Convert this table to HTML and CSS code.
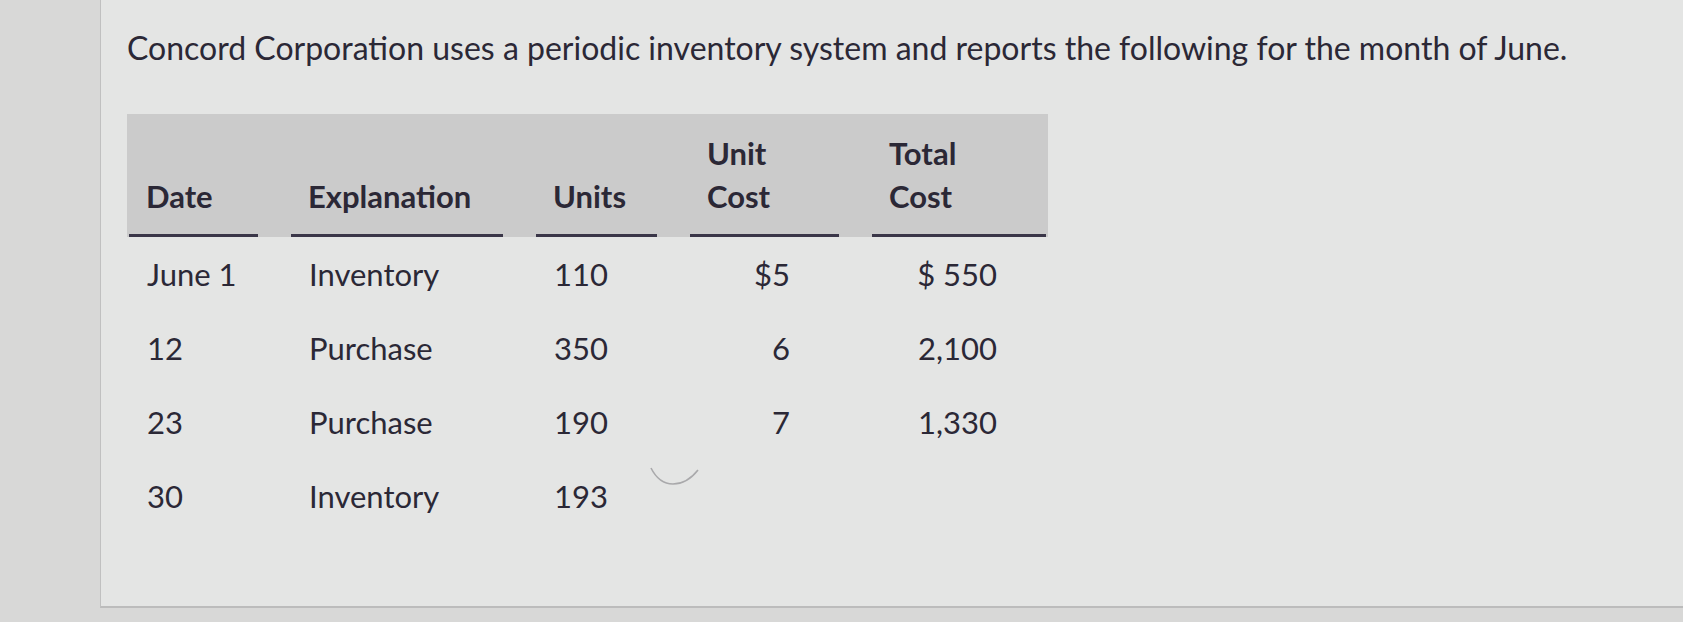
FILE: index.html
```html
<!DOCTYPE html>
<html>
<head>
<meta charset="utf-8">
<link rel="stylesheet" href="styles.css">
</head>
<body>
<div class="screen">
  <div class="side"></div>
  <div class="panel">
    <p class="title">Concord Corporation uses a periodic inventory system and reports the following for the month of June.</p>
    <div class="table">
      <div class="thead">
        <div class="th">Date</div>
        <div class="th">Explanation</div>
        <div class="th">Units</div>
        <div class="th">Unit<br>Cost</div>
        <div class="th">Total<br>Cost</div>
      </div>
      <div class="row">
        <div class="td">June 1</div>
        <div class="td">Inventory</div>
        <div class="td">110</div>
        <div class="td num">$5</div>
        <div class="td num">$ 550</div>
      </div>
      <div class="row">
        <div class="td">12</div>
        <div class="td">Purchase</div>
        <div class="td">350</div>
        <div class="td num">6</div>
        <div class="td num">2,100</div>
      </div>
      <div class="row">
        <div class="td">23</div>
        <div class="td">Purchase</div>
        <div class="td">190</div>
        <div class="td num">7</div>
        <div class="td num">1,330</div>
      </div>
      <div class="row">
        <div class="td">30</div>
        <div class="td">Inventory</div>
        <div class="td">193</div>
        <div class="td num"></div>
        <div class="td num"></div>
      </div>
    </div>
    <svg class="cursor" width="52" height="24" viewBox="0 0 52 24"><path d="M2 4 Q 10 20 24 20 Q 38 20 49 6" fill="none" stroke="#a9a9ab" stroke-width="1.6"/></svg>
  </div>
</div>
</body>
</html>
```
FILE: styles.css
```css
html, body {
  margin: 0;
  padding: 0;
  background: #d8d8d7;
  width: 1683px;
  height: 622px;
  overflow: hidden;
}
.screen {
  display: flex;
  height: 608px;
  font-family: "Lato", "Open Sans", sans-serif;
  color: #2b2836;
}
.side {
  width: 100px;
  flex: none;
}
.panel {
  position: relative;
  flex: 1;
  background: #e4e5e4;
  border-left: 1px solid #c0c0c0;
  border-bottom: 2px solid #bcbcbc;
  padding-left: 26px;
}
.title {
  margin: 28px 0 0 0;
  font-size: 32px;
  line-height: 40px;
  white-space: nowrap;
}
.table {
  margin-top: 46px;
  width: 921px;
}
.thead, .row {
  display: grid;
  grid-template-columns: 129px 212px 121px 149px 174px;
  column-gap: 33px;
}
.thead {
  background: #cbcbcb;
  padding: 18px 1px 0 2px;
}
.th {
  font-size: 31px;
  font-weight: 700;
  line-height: 43px;
  padding: 0 0 16px 17px;
  border-bottom: 3px solid #3a3648;
  display: flex;
  flex-direction: column;
  justify-content: flex-end;
}
.row {
  padding: 0 1px 0 2px;
}
.td {
  font-size: 31px;
  line-height: 74px;
  height: 74px;
  padding-left: 18px;
}
.td.num {
  text-align: right;
  padding-left: 0;
  padding-right: 49px;
}
.cursor {
  position: absolute;
  left: 548px;
  top: 464px;
}
```
